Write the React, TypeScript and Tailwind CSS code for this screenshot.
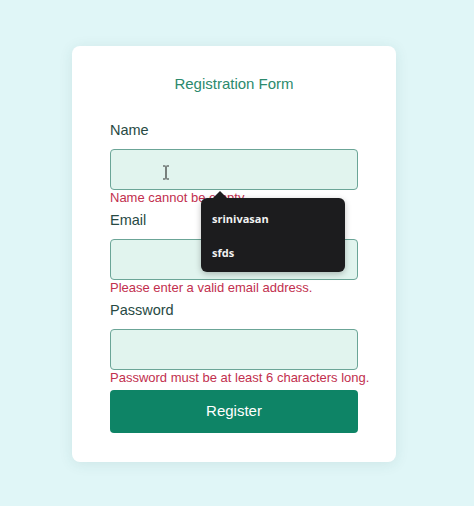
import React from 'react'

const fields = [
  { label: 'Name', error: 'Name cannot be empty' },
  { label: 'Email', error: 'Please enter a valid email address.' },
  { label: 'Password', error: 'Password must be at least 6 characters long.' },
]

function IBeam() {
  return (
    <svg width="8" height="15" viewBox="0 0 8 15" className="absolute left-[51px] top-[15px]">
      <path d="M1 1h2.5M4.5 1H7M4 1.5v12M1 14h2.5M4.5 14H7" stroke="#333" strokeWidth="1.2" fill="none" />
    </svg>
  )
}

export default function App() {
  return (
    <div className="min-h-[506px] bg-[#e0f6f7] flex justify-center pt-[46px] pr-[6px] font-['Liberation_Sans',Arial,sans-serif]">
      <div className="relative w-[324px] h-[416px] bg-white rounded-[8px] shadow-[0_2px_14px_rgba(40,90,90,0.10)] px-[38px] pt-[28px]">
        <h1 className="text-center text-[15px] leading-[20px] text-[#2c8a6d]">Registration Form</h1>
        <div className="mt-[27px]">
          {fields.map((f, i) => (
            <div key={f.label} className="mb-[6px]">
              <label className="block text-[14.5px] leading-[18px] text-[#284a44]">{f.label}</label>
              <div className="relative mt-[10px] h-[41px] rounded-[4px] border border-[#6ba597] bg-[#e1f4ee]">
                {i === 0 && <IBeam />}
              </div>
              <p className="text-[13px] leading-[15px] text-[#c22f4e] whitespace-nowrap">{f.error}</p>
            </div>
          ))}
          <button className="mt-[-1px] w-full h-[43px] rounded-[4px] bg-[#0e8466] text-white text-[15px]">
            Register
          </button>
        </div>

        <div className="absolute left-[129px] top-[152px] w-[144px] h-[74px] rounded-[6px] bg-[#1c1c1e] shadow-[0_2px_6px_rgba(0,0,0,0.25)] font-['Open_Sans',sans-serif] text-[11px] font-bold text-[#f2f2f2] px-[11px] pt-[13px]">
          <div className="absolute left-[11px] -top-[7px] w-0 h-0 border-l-[8px] border-r-[8px] border-b-[8px] border-l-transparent border-r-transparent border-b-[#1c1c1e]" />
          <div className="leading-[16px]">srinivasan</div>
          <div className="leading-[16px] mt-[18px]">sfds</div>
        </div>
      </div>
    </div>
  )
}
